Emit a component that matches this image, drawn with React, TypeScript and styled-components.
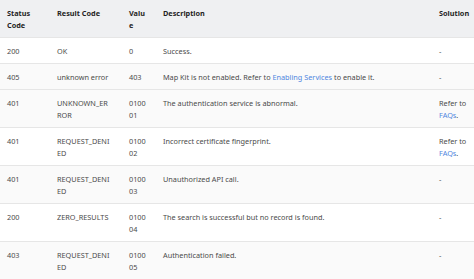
import styled, { createGlobalStyle } from "styled-components"

const GlobalStyle = createGlobalStyle`
  html, body {
    margin: 0;
    padding: 0;
    background: #ffffff;
    overflow: hidden;
  }
`

const Page = styled.div`
  width: 474px;
  height: 279px;
  overflow: hidden;
  font-family: "Noto Sans", Lato, sans-serif;
`

const Table = styled.table`
  width: 490px;
  border-collapse: collapse;
  table-layout: fixed;
  font-size: 7.3px;
  line-height: 12px;
`

const HeadCell = styled.th<{ $w: number; $padRight?: number }>`
  width: ${p => p.$w}px;
  box-sizing: border-box;
  padding: 7px ${p => p.$padRight ?? 7}px 6px 7px;
  text-align: left;
  vertical-align: top;
  font-weight: 700;
  color: #1f1f1f;
  background: #eff0f2;
  overflow-wrap: anywhere;
`

const Row = styled.tr<{ $shade?: boolean }>`
  background: ${p => (p.$shade ? "#fafafa" : "#ffffff")};
  border-top: 1px solid #e6e6e6;
`

const Cell = styled.td<{ $padRight?: number }>`
  padding: 7px ${p => p.$padRight ?? 7}px 6px 7px;
  vertical-align: top;
  color: #4a4a4a;
  overflow-wrap: anywhere;
`

const Link = styled.a`
  color: #4f86e0;
  text-decoration: none;
`

type Entry = {
  status: string
  code: string
  value: string
  desc: React.ReactNode
  solution: React.ReactNode
  shade?: boolean
}

const faqs = (
  <>
    Refer to <Link>FAQs</Link>.
  </>
)

const rows: Entry[] = [
  { status: "200", code: "OK", value: "0", desc: "Success.", solution: "-" },
  {
    status: "405",
    code: "unknown error",
    value: "403",
    desc: (
      <>
        Map Kit is not enabled. Refer to <Link>Enabling Services</Link> to enable it.
      </>
    ),
    solution: "-",
    shade: true,
  },
  { status: "401", code: "UNKNOWN_ERROR", value: "010001", desc: "The authentication service is abnormal.", solution: faqs, shade: true },
  { status: "401", code: "REQUEST_DENIED", value: "010002", desc: "Incorrect certificate fingerprint.", solution: faqs },
  { status: "401", code: "REQUEST_DENIED", value: "010003", desc: "Unauthorized API call.", solution: "-", shade: true },
  { status: "200", code: "ZERO_RESULTS", value: "010004", desc: "The search is successful but no record is found.", solution: "-" },
  { status: "403", code: "REQUEST_DENIED", value: "010005", desc: "Authentication failed.", solution: "-", shade: true },
]

const App = () => {
  return (
    <Page>
      <GlobalStyle />
      <Table>
        <thead>
          <tr>
            <HeadCell $w={50}>Status Code</HeadCell>
            <HeadCell $w={72} $padRight={11}>Result Code</HeadCell>
            <HeadCell $w={34} $padRight={10}>Value</HeadCell>
            <HeadCell $w={276}>Description</HeadCell>
            <HeadCell $w={58}>Solution</HeadCell>
          </tr>
        </thead>
        <tbody>
          {rows.map((r, i) => (
            <Row key={i} $shade={r.shade}>
              <Cell>{r.status}</Cell>
              <Cell $padRight={11}>{r.code}</Cell>
              <Cell $padRight={10}>{r.value}</Cell>
              <Cell>{r.desc}</Cell>
              <Cell>{r.solution}</Cell>
            </Row>
          ))}
        </tbody>
      </Table>
    </Page>
  )
}

export default App
